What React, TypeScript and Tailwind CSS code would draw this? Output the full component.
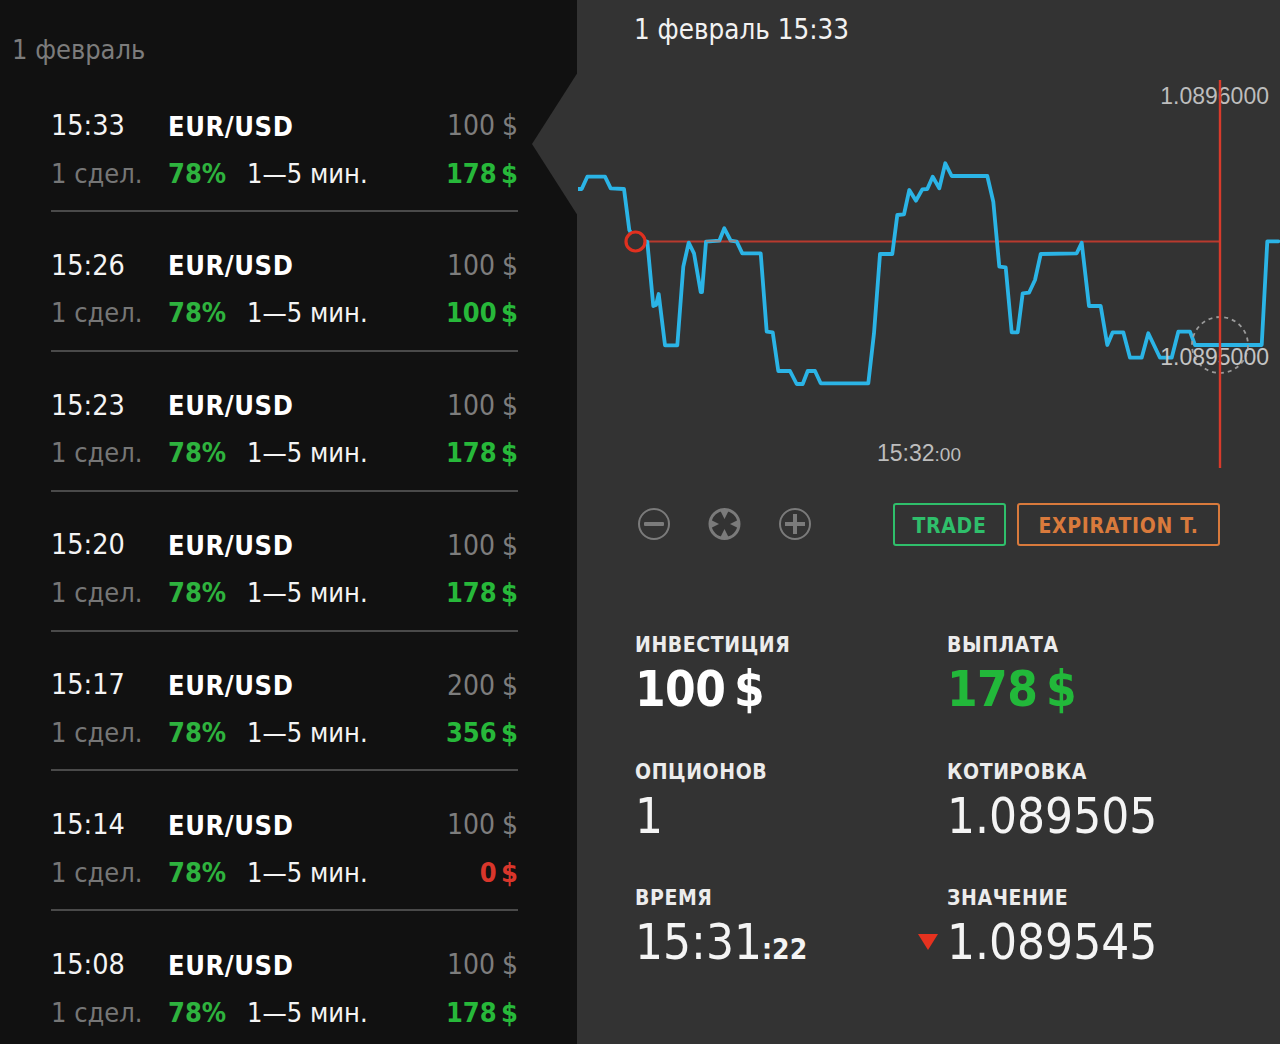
const rows = [
  { t: "15:33", inv: "100 $", pay: "178 $", lose: false },
  { t: "15:26", inv: "100 $", pay: "100 $", lose: false },
  { t: "15:23", inv: "100 $", pay: "178 $", lose: false },
  { t: "15:20", inv: "100 $", pay: "178 $", lose: false },
  { t: "15:17", inv: "200 $", pay: "356 $", lose: false },
  { t: "15:14", inv: "100 $", pay: "0 $", lose: true },
  { t: "15:08", inv: "100 $", pay: "178 $", lose: false },
];

const a: [number, number][] = [[22,327],[35,327],[52,290],[105,290],[122,325],[162,327],[178,450],[190,470],[232,485],[250,678],[258,675],[266,642],[285,796],[322,796],[340,560],[356,488],[372,520],[392,636],[396,636],[408,485],[448,482],[463,445],[482,482],[500,485],[517,520],[572,520],[590,755],[608,757],[625,873],[660,873],[680,912],[698,912],[713,873],[735,873],[752,910],[895,910],[912,760],[930,522],[967,522],[982,405],[1002,403],[1018,330],[1038,362],[1057,328],[1072,327]];
const b: [number, number][] = [[22,327],[38,290],[58,325],[76,250],[95,288],[202,288],[220,365],[238,560],[257,562],[275,757],[293,757],[308,640],[327,638],[345,600],[362,522],[470,520],[485,488],[507,678],[542,678],[562,795],[578,757],[610,757],[630,833],[665,833],[685,760],[720,833],[755,833],[775,755],[810,755],[825,795],[1025,795],[1042,484],[1075,484]];
const linePoints = [
  ...a.map(([x, y]) => `${(570 + x / 3).toFixed(1)},${(80 + y / 3).toFixed(1)}`),
  ...b.map(([x, y]) => `${(920 + x / 3).toFixed(1)},${(80 + y / 3).toFixed(1)}`),
].join(" ");

function Row({ r, last }: { r: (typeof rows)[number]; last: boolean }) {
  return (
    <div className={`h-[139.9px] pt-[31px] ${last ? "" : "border-b-2 border-[#4a4a4a]"} box-border`}>
      <div className="flex h-[46px] items-center text-[27px] leading-none">
        <span className="w-[117px] text-[28.5px] text-[#f4f4f4]">{r.t}</span>
        <span className="font-semibold tracking-[0.6px] text-white">EUR/USD</span>
        <span className="ml-auto text-[28px] [word-spacing:-1px] text-[#7d7d7d]">{r.inv}</span>
      </div>
      <div className="mt-[1px] flex h-[46px] items-center text-[27px] leading-none">
        <span className="w-[117px] text-[#767676]">1 сдел.</span>
        <span className="w-[79px] font-semibold text-[#2eb33e]">78%</span>
        <span className="text-[#f4f4f4]">1—5 мин.</span>
        <span className={`ml-auto font-semibold [word-spacing:-4px] ${r.lose ? "text-[#d9362b]" : "text-[#27b83a]"}`}>{r.pay}</span>
      </div>
    </div>
  );
}

function Stat({ label, children, className }: { label: string; children: React.ReactNode; className?: string }) {
  return (
    <div className={className}>
      <div className="h-[27px] text-[21px] leading-[28px] font-semibold tracking-[0.6px] text-[#ececec]">{label}</div>
      <div className="h-[64px] text-[49px] leading-[64px]">{children}</div>
    </div>
  );
}

function ZoomIcons() {
  return (
    <svg width="180" height="36" viewBox="0 0 180 36" className="block" fill="none">
      <circle cx="18" cy="17" r="15" stroke="#7b7b7b" strokeWidth="2" />
      <rect x="8" y="15" width="20" height="4" rx="1" fill="#7b7b7b" />
      <circle cx="88.5" cy="17" r="14.5" stroke="#7b7b7b" strokeWidth="3" />
      <path d="M84 3h9l-4.500 9zM84 31h9l-4.500-9zM75 13v8l8-4zM102 13v8l-8-4z" fill="#7b7b7b" />
      <circle cx="159" cy="17" r="15" stroke="#7b7b7b" strokeWidth="2" />
      <path d="M157 7h4v8h8v4h-8v8h-4v-8h-8v-4h8z" fill="#7b7b7b" />
    </svg>
  );
}

export default function App() {
  return (
    <div className="flex h-[1044px] w-[1280px] overflow-hidden bg-[#333333] font-['DejaVu_Sans','Noto_Sans',sans-serif] [font-stretch:condensed]">
      <aside className="w-[577px] shrink-0 bg-[#111111]">
        <div className="h-[72px] pl-[12px] pt-[30px] text-[27px] leading-[40px] text-[#7c7c7c]">1 февраль</div>
        <div className="ml-[51px] mr-[59px]">
          {rows.map((r, i) => (
            <Row key={r.t} r={r} last={i === rows.length - 1} />
          ))}
        </div>
      </aside>
      <main className="relative flex-1 border-r-2 border-[#14283a]">
        <svg className="absolute left-[-45px] top-[72px]" width="46" height="144" viewBox="0 0 46 144">
          <path d="M46 0L0 72L46 144Z" fill="#333333" />
        </svg>
        <div className="h-[58px] pl-[57px] pt-[9px] text-[27.500px] leading-[40px] text-[#f2f2f2]">1 февраль 15:33</div>
        <svg width="703" height="432" viewBox="577 58 703 432" className="block" fill="none">
          <line x1="645" y1="241.5" x2="1220" y2="241.5" stroke="#b83a2e" strokeWidth="2" />
          <polyline points={linePoints} stroke="#2bb4e6" strokeWidth="3.8" strokeLinejoin="round" strokeLinecap="round" />
          <line x1="706" y1="241" x2="720" y2="241" stroke="#8a8f96" strokeWidth="2" />
          <line x1="729" y1="241" x2="736" y2="241" stroke="#8a8f96" strokeWidth="2" />
          <circle cx="1220" cy="345" r="28" stroke="#9a9a9a" strokeWidth="1.8" strokeDasharray="4 4" />
          <text x="1269" y="104" textAnchor="end" className="fill-[#bdbdbd] font-['Liberation_Sans'] text-[23px]">1.0896000</text>
          <text x="1269" y="365" textAnchor="end" className="fill-[#c4c4c4] font-['Liberation_Sans'] text-[23px]">1.0895000</text>
          <text x="877" y="461" className="fill-[#bdbdbd] font-['Liberation_Sans'] text-[23px]">
            15:32<tspan className="text-[19px]">:00</tspan>
          </text>
          <line x1="1220" y1="80" x2="1220" y2="468" stroke="#d83a2b" strokeWidth="2.4" />
          <circle cx="635.5" cy="241.5" r="9.500" stroke="#e0301f" strokeWidth="3.2" fill="#333333" />
        </svg>
        <div className="mt-[13px] flex h-[43px] items-center pl-[59px]">
          <ZoomIcons />
          <button className="ml-[77px] h-[43px] w-[113px] rounded-[3px] border-2 border-[#2fbf6b] pt-[3px] text-[21px] leading-none font-semibold tracking-[0.7px] text-[#2fbf6b]">TRADE</button>
          <button className="ml-[11px] h-[43px] w-[203px] rounded-[3px] border-2 border-[#d97a3c] pt-[3px] text-[21px] leading-none font-semibold tracking-[0.7px] text-[#d97a3c]">EXPIRATION T.</button>
        </div>
        <div className="mt-[85px] grid grid-cols-[312px_1fr] gap-y-[35.500px] pl-[58px]">
          <Stat label="ИНВЕСТИЦИЯ"><span className="font-bold tracking-[-0.6px] [word-spacing:-6px] text-white">100 $</span></Stat>
          <Stat label="ВЫПЛАТА"><span className="font-bold tracking-[-0.6px] [word-spacing:-6px] text-[#22b83a]">178 $</span></Stat>
          <Stat label="ОПЦИОНОВ"><span className="text-[#f4f4f4]">1</span></Stat>
          <Stat label="КОТИРОВКА"><span className="text-[#f4f4f4]">1.089505</span></Stat>
          <Stat label="ВРЕМЯ">
            <span className="text-[#f4f4f4]">15:31</span>
            <span className="text-[28px] font-semibold text-[#f4f4f4]">:22</span>
          </Stat>
          <Stat label="ЗНАЧЕНИЕ" className="relative">
            <span className="text-[#f4f4f4]">1.089545</span>
            <svg className="absolute left-[-29px] top-[50px]" width="20" height="16" viewBox="0 0 20 16">
              <path d="M0 0H20L10 16Z" fill="#e6321f" />
            </svg>
          </Stat>
        </div>
      </main>
    </div>
  );
}
